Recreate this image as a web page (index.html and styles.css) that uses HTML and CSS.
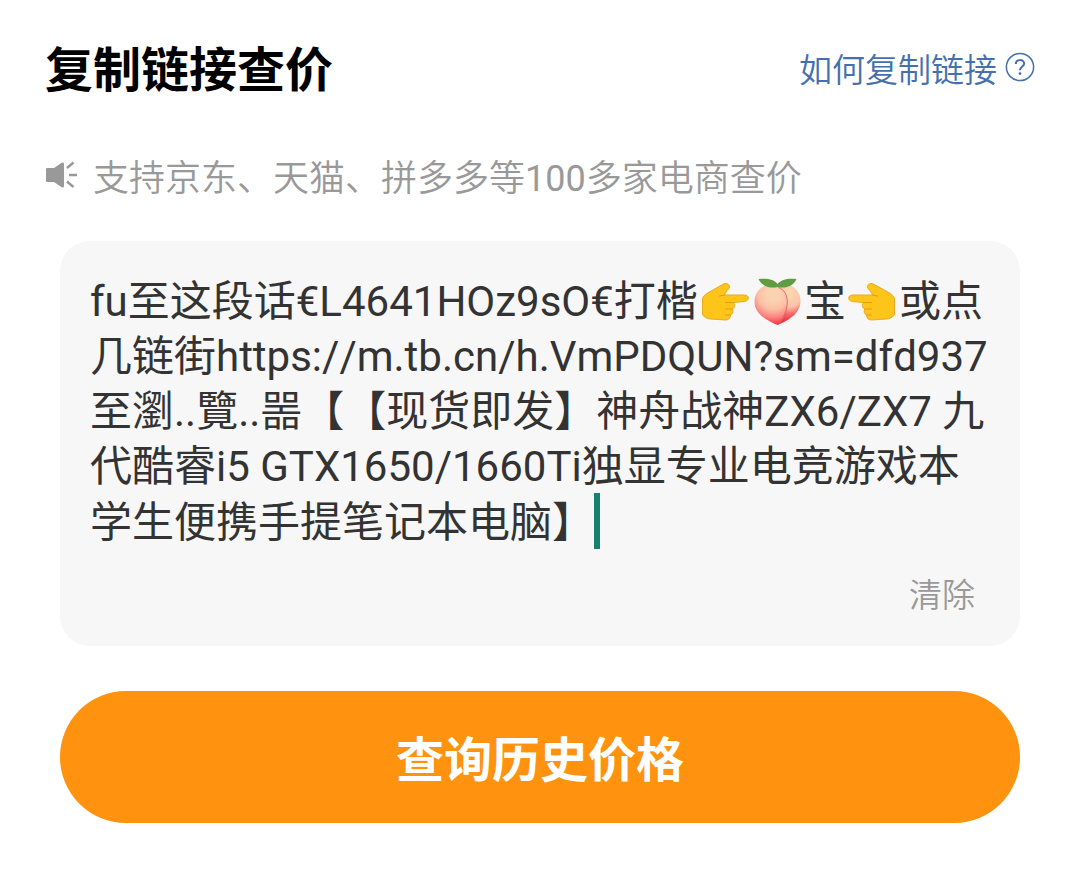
FILE: index.html
```html
<!DOCTYPE html>
<html lang="zh-CN">
<head>
<meta charset="utf-8">
<meta name="viewport" content="width=device-width, initial-scale=1">
<title>复制链接查价</title>
<link rel="stylesheet" href="styles.css">
</head>
<body>
<svg class="defs" aria-hidden="true">
  <defs>
    <radialGradient id="peach-skin" gradientUnits="userSpaceOnUse" cx="22" cy="16" r="31">
      <stop offset="0.2" stop-color="#fbd3b2"/>
      <stop offset="0.5" stop-color="#fcbfa6"/>
      <stop offset="0.75" stop-color="#fa8480"/>
      <stop offset="1" stop-color="#f2323d"/>
    </radialGradient>
    <radialGradient id="peach-back" gradientUnits="userSpaceOnUse" cx="37" cy="15" r="28">
      <stop offset="0.1" stop-color="#fbd6b0"/>
      <stop offset="0.5" stop-color="#fcc3a8"/>
      <stop offset="0.75" stop-color="#f66a6c"/>
      <stop offset="1" stop-color="#ee3540"/>
    </radialGradient>
    <symbol id="hand" viewBox="0 0 52 48">
      <path fill="#fdc41a" stroke="#eda91c" stroke-width="1" d="M4 21C4 19 6 17 9 15L25 6C29 4 33 8 30 11C28 13 27 15 26 17H46C51 17 51 23 46 23.500L35 24.500C37 27 36 30 34 31C35 34 34 36 32 37C32 40 30 42 27 42L12 41C9 41 6 39 4 37Z"/>
      <path fill="none" stroke="#e69a14" stroke-width="1" stroke-linecap="round" d="M26 17L21 18M35 24.500H27M34 31H27M32 37H27"/>
    </symbol>
  </defs>
</svg>
<main class="page">
  <header class="header">
    <h1 class="title">复制链接查价</h1>
    <a class="help" href="#help">
      <span>如何复制链接</span>
      <svg class="help-icon" viewBox="0 0 30 30" aria-hidden="true">
        <circle cx="15" cy="15" r="13.6" fill="none" stroke="currentColor" stroke-width="1.5"/>
        <path d="M10.8 12C10.8 6.9 19.2 6.9 19.2 11.6C19.2 14.6 15 14.6 15 18.2" fill="none" stroke="currentColor" stroke-width="2"/>
        <circle cx="15" cy="21.6" r="1.4" fill="currentColor"/>
      </svg>
    </a>
  </header>
  <p class="notice">
    <svg class="speaker" viewBox="0 0 32 28" aria-hidden="true">
      <path fill="currentColor" d="M2 7H9L17 1.500Q19 1 19 3V25Q19 27 17 26.500L9 21H2Q1 21 1 20V8Q1 7 2 7Z"/>
      <path fill="none" stroke="currentColor" stroke-width="2.4" d="M22 7L28.500 1.500M24 14H32M22 20.500L28.500 26"/>
    </svg>
    <span>支持京东、天猫、拼多多等<span class="digits">100</span>多家电商查价</span>
  </p>
  <section class="card">
    <div class="editor" role="textbox" aria-multiline="true" aria-label="商品链接" contenteditable="true" spellcheck="false">fu至这段话€L4641HOz9sO€打楷<svg class="emoji" role="img" aria-label="指向右" viewBox="0 0 52 48"><use href="#hand"/></svg><svg class="emoji" role="img" aria-label="桃子" viewBox="0 0 52 48"><path fill="url(#peach-back)" d="M24 9C34 2 49 9 49 23C49 35 38 42 26 47Z"/><path fill="url(#peach-skin)" d="M26 9C15 3 3 11 3 24C3 35 14 42 26 47C34 39 39 21 31 12Q29 10 26 9Z"/><path fill="none" stroke="#e76365" stroke-width="1" d="M27 9.500C40 14 37 34 28 46"/><path fill="#619b42" d="M26 9C19 11 10 8 7 1C15 0 23 1 26 6C30 1 37 0 45 1C42 8 34 11 26 9Z"/></svg>宝<svg class="emoji" role="img" aria-label="指向左" viewBox="0 0 52 48"><use href="#hand" transform="translate(52 0) scale(-1 1)"/></svg>或点<br>几链街https://m.tb.cn/h.VmPDQUN?sm=dfd937<br>至瀏..覽..噐【【现货即发】神舟战神ZX6/ZX7 九<br>代酷睿i5 GTX1650/1660Ti独显专业电竞游戏本<br>学生便携手提笔记本电脑】<span class="caret"></span></div>
    <button class="clear" type="button">清除</button>
  </section>
  <button class="submit" type="button">查询历史价格</button>
</main>
</body>
</html>
```
FILE: styles.css
```css
* { box-sizing: border-box; }

body {
  margin: 0;
  background: #fff;
  color: #333;
  font-family: Roboto, "Noto Sans CJK SC", sans-serif;
}

.defs { position: absolute; width: 0; height: 0; }

.page {
  display: flex;
  flex-direction: column;
  padding: 36px 45px 46px;
}

.header {
  display: flex;
  align-items: center;
  justify-content: space-between;
}

.title {
  margin: 0;
  color: #000;
  font-size: 48px;
  line-height: 70px;
  font-weight: 700;
}

.help {
  display: flex;
  align-items: center;
  gap: 8px;
  color: #456fad;
  font-size: 33px;
  line-height: 48px;
  font-weight: 350;
  text-decoration: none;
}

.help-icon { width: 30px; height: 30px; margin-bottom: 8px; }

.notice {
  display: flex;
  align-items: center;
  gap: 16px;
  margin: 47px 0 0;
  color: #999;
  font-size: 36px;
  line-height: 52px;
  font-weight: 350;
}

.digits { font-weight: 400; }

.speaker { width: 32px; height: 28px; margin-bottom: 8px; }

.card {
  display: flex;
  flex-direction: column;
  margin: 36px 15px 0;
  padding: 33px 30px 26px;
  border-radius: 30px;
  background: #f7f7f7;
}

.editor {
  font-size: 42px;
  line-height: 55px;
  font-kerning: none;
  text-spacing-trim: space-all;
  white-space: nowrap;
  outline: none;
}

.emoji {
  width: 53px;
  height: 48px;
  vertical-align: -10px;
}

.caret {
  display: inline-block;
  width: 6px;
  height: 56px;
  background: #17806f;
  margin-top: -1px;
  vertical-align: -12px;
}

.clear {
  align-self: flex-end;
  margin-top: 22px;
  padding: 0 15px;
  border: 0;
  background: none;
  color: #999;
  font: 350 33px/48px Roboto, "Noto Sans CJK SC", sans-serif;
}

.submit {
  margin: 45px 15px 0;
  padding: 34px 30px 26px;
  border: 0;
  border-radius: 66px;
  background: #ff920e;
  color: #fff;
  font: 700 48px/72px Roboto, "Noto Sans CJK SC", sans-serif;
}
```
